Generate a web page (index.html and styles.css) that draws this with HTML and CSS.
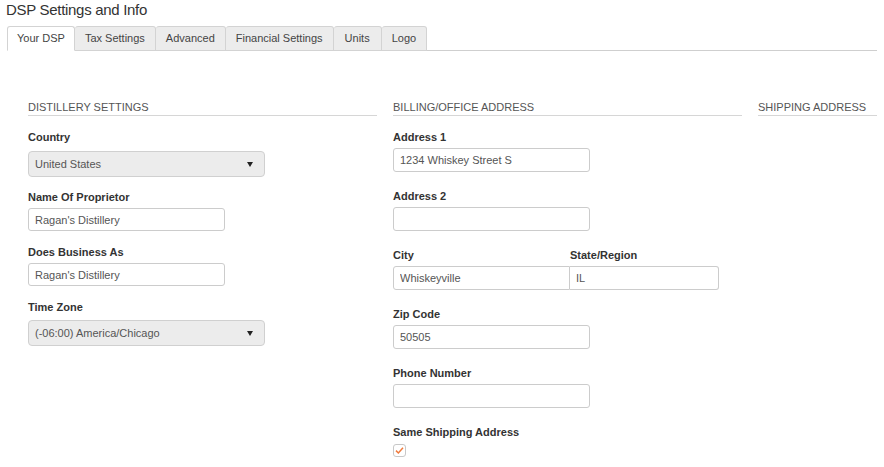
FILE: index.html
```html
<!doctype html>
<html>
    <head>
        <meta charset="utf-8">
        <title>DSP Settings and Info</title>
        <link rel="stylesheet" href="styles.css">
    </head>
    <body>
        <div class="page">
            <h1 class="page-title">DSP Settings and Info</h1>

            <ul class="tabs">
                <li class="tab active">Your DSP</li>
                <li class="tab">Tax Settings</li>
                <li class="tab">Advanced</li>
                <li class="tab">Financial Settings</li>
                <li class="tab tab-wide">Units</li>
                <li class="tab">Logo</li>
            </ul>

            <div class="panel">
                <!-- distillery -->
                <div class="col col-main distillery">
                    <h2 class="section-title">Distillery Settings</h2>
                    <div class="field field-first">
                        <label class="label">Country</label>
                        <div class="select select-country"><span>United States</span></div>
                    </div>
                    <div class="field">
                        <label class="label">Name Of Proprietor</label>
                        <input class="input" type="text" value="Ragan's Distillery">
                    </div>
                    <div class="field">
                        <label class="label">Does Business As</label>
                        <input class="input" type="text" value="Ragan's Distillery">
                    </div>
                    <div class="field">
                        <label class="label">Time Zone</label>
                        <div class="select select-zone"><span>(-06:00) America/Chicago</span></div>
                    </div>
                </div>

                <!-- billing -->
                <div class="col col-main billing">
                    <h2 class="section-title">Billing/Office Address</h2>
                    <div class="field">
                        <label class="label">Address 1</label>
                        <input class="input" type="text" value="1234 Whiskey Street S">
                    </div>
                    <div class="field">
                        <label class="label">Address 2</label>
                        <input class="input" type="text" value="">
                    </div>
                    <div class="field-row">
                        <div class="field city">
                            <label class="label">City</label>
                            <input class="input input-city" type="text" value="Whiskeyville">
                        </div>
                        <div class="field state">
                            <label class="label">State/Region</label>
                            <input class="input input-state" type="text" value="IL">
                        </div>
                    </div>
                    <div class="field">
                        <label class="label">Zip Code</label>
                        <input class="input" type="text" value="50505">
                    </div>
                    <div class="field">
                        <label class="label">Phone Number</label>
                        <input class="input" type="text" value="">
                    </div>
                    <div class="field">
                        <label class="label">Same Shipping Address</label>
                        <span class="checkbox">
                            <svg width="9" height="9" viewBox="0 0 9 9"><path d="M1 4.6 L3.4 7 L8 1.8" fill="none" stroke="#f07a3c" stroke-width="1.5"/></svg>
                        </span>
                    </div>
                </div>

                <!-- shipping -->
                <div class="col col-side">
                    <h2 class="section-title">Shipping Address</h2>
                </div>
            </div>
        </div>
    </body>
</html>
```

FILE: styles.css
```css
*{
    margin: 0;
    padding: 0;
    box-sizing: border-box;
}
body{
    font-family: "Liberation Sans", Arial, sans-serif;
    color: #333;
    background: #fff;
}
.page{
    padding: 0 7px 0 6px;
}
.page-title{
    font-size: 15px;
    letter-spacing: -0.3px;
    font-weight: normal;
    line-height: 20px;
    color: #333;
}

/* tabs */
.tabs{
    list-style: none;
    display: flex;
    margin: 6px 0 0 1px;
    height: 25px;
    border-bottom: 1px solid #cfcfcf;
    width: 870px;
}
.tab{
    height: 25px;
    line-height: 23px;
    font-size: 11px;
    color: #444;
    padding: 0 10px;
    background: #ececec;
    border: 1px solid #d3d3d3;
    border-left: none;
    border-radius: 3px 3px 0 0;
}
.tab-wide{
    padding: 0 11px;
}
.tab.active{
    background: #fff;
    border-left: 1px solid #d3d3d3;
    border-bottom-color: #fff;
    padding: 0 9px;
}

/* content */
.panel{
    display: flex;
    padding: 49px 0 0 22px;
}
.col-main{
    width: 349px;
    margin-right: 16px;
}
.col-side{
    width: 119px;
}
.section-title{
    font-size: 11px;
    font-weight: normal;
    text-transform: uppercase;
    color: #555;
    line-height: 14px;
    padding-bottom: 1px;
    border-bottom: 1px solid #d6d6d6;
    margin-bottom: 14px;
}
.label{
    display: block;
    font-size: 11px;
    font-weight: bold;
    color: #333;
    line-height: 14px;
    margin-bottom: 4px;
}
.field{
    margin-bottom: 14px;
}
.distillery .field-first{
    margin-bottom: 13px;
}
.input{
    display: block;
    width: 197px;
    height: 23px;
    border: 1px solid #ccc;
    border-radius: 3px;
    font-family: "Liberation Sans", Arial, sans-serif;
    font-size: 11px;
    color: #555;
    padding: 0 6px;
    outline: none;
    background: #fff;
}
.select{
    position: relative;
    width: 237px;
    height: 26px;
    margin-top: 7px;
    background: #ececec;
    border: 1px solid #d0d0d0;
    border-radius: 4px;
    font-size: 11px;
    color: #555;
    line-height: 24px;
    padding-left: 6px;
}
.select-zone{
    margin-top: 6px;
}
.select::after{
    content: "";
    position: absolute;
    right: 11px;
    top: 10px;
    border-left: 3px solid transparent;
    border-right: 3px solid transparent;
    border-top: 5px solid #222;
}

/* billing column */
.billing .field{
    margin-bottom: 17px;
}
.billing .input{
    height: 24px;
}
.field-row{
    display: flex;
}
.billing .input-city{
    width: 177px;
    border-radius: 3px 0 0 3px;
}
.billing .input-state{
    width: 149px;
    border-left: none;
    border-radius: 0 3px 3px 0;
}
.checkbox{
    display: flex;
    align-items: center;
    justify-content: center;
    width: 13px;
    height: 13px;
    margin-top: 5px;
    border: 1px solid #c8c8c8;
    border-radius: 3px;
    background: #fff;
}
```
